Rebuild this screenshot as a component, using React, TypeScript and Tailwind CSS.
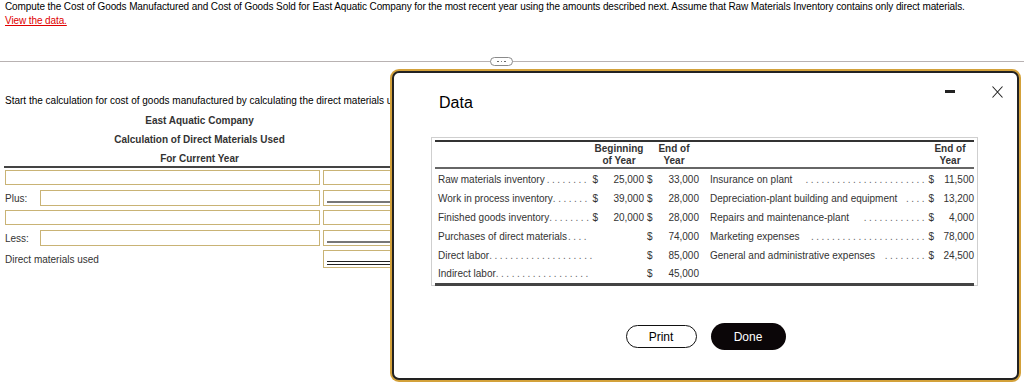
import React from "react";

type LeftRow = {
  label: string;
  dollarA: boolean;
  begin?: string;
  end: string;
  dots: number;
};

type RightRow = {
  label: string;
  amount: string;
  dots: number;
};

const leftRows: LeftRow[] = [
  { label: "Raw materials inventory", dollarA: true, begin: "25,000", end: "33,000", dots: 8 },
  { label: "Work in process inventory", dollarA: true, begin: "39,000", end: "28,000", dots: 7 },
  { label: "Finished goods inventory", dollarA: true, begin: "20,000", end: "28,000", dots: 8 },
  { label: "Purchases of direct materials", dollarA: false, end: "74,000", dots: 4 },
  { label: "Direct labor", dollarA: false, end: "85,000", dots: 20 },
  { label: "Indirect labor", dollarA: false, end: "45,000", dots: 18 },
];

const rightRows: (RightRow | null)[] = [
  { label: "Insurance on plant", amount: "11,500", dots: 23 },
  { label: "Depreciation-plant building and equipment", amount: "13,200", dots: 4 },
  { label: "Repairs and maintenance-plant", amount: "4,000", dots: 12 },
  { label: "Marketing expenses", amount: "78,000", dots: 22 },
  { label: "General and administrative expenses", amount: "24,500", dots: 8 },
  null,
];

function Leader({ count }: { count: number }) {
  return (
    <>
      <span className="flex-1" />
      <span className="mr-[1px] whitespace-nowrap text-[#666] tracking-[2.5px]">
        {".".repeat(count)}
      </span>
    </>
  );
}

function FormBox({ line }: { line?: "single" | "double" }) {
  return (
    <div className="relative h-full w-[90px] border border-[#c9b375] bg-white">
      {line === "single" && (
        <div className="absolute bottom-[2px] left-[3px] right-0 h-[2px] bg-[#777]" />
      )}
      {line === "double" && (
        <div className="absolute bottom-[2px] left-[3px] right-0 h-[4px] border-y-[1.5px] border-[#222]" />
      )}
    </div>
  );
}

export default function App() {
  return (
    <div className="relative h-[385px] w-[1024px] overflow-hidden bg-white font-['Liberation_Sans',Arial,sans-serif] text-black">
      <div className="px-[5px] text-[10px] leading-[14px] tracking-[-0.1px]">
        <p className="whitespace-nowrap">
          Compute the Cost of Goods Manufactured and Cost of Goods Sold for East Aquatic Company for the most recent year using the amounts described next. Assume that Raw Materials Inventory contains only direct materials.
        </p>
        <p>
          <span className="text-[#e00000] underline">View the data.</span>
        </p>
      </div>

      <div className="relative mt-[33px] h-[1px] bg-[#b8b2b2]">
        <div className="absolute left-[490px] top-[-4px] flex h-[9px] w-[23px] items-center justify-center gap-[2px] rounded-full border border-[#8a8a8a] bg-white">
          <span className="h-[1.5px] w-[1.5px] rounded-full bg-[#555]" />
          <span className="h-[1.5px] w-[1.5px] rounded-full bg-[#555]" />
          <span className="h-[1.5px] w-[1.5px] rounded-full bg-[#555]" />
        </div>
      </div>

      <div className="mt-[32px] w-[420px] pl-[5px] text-[10px]">
        <p className="whitespace-nowrap leading-[14px]">
          Start the calculation for cost of goods manufactured by calculating the direct materials used.
        </p>
        <div className="mt-[3px] w-[389px] text-center font-bold text-[#333]">
          <div className="flex h-[19px] items-center justify-center">East Aquatic Company</div>
          <div className="flex h-[19px] items-center justify-center">Calculation of Direct Materials Used</div>
          <div className="flex h-[17px] items-center justify-center pt-[2px]">For Current Year</div>
        </div>
        <div className="ml-[-1px] h-[2px] w-[420px] bg-[#444]" />

        <div className="mt-[2px] flex flex-col text-[#333]">
          <div className="flex h-[20px] items-start gap-[3px]">
            <div className="h-[15px] w-[315px] border border-[#c9b375]" />
            <div className="h-[15px]"><FormBox /></div>
          </div>
          <div className="flex h-[20px] items-start gap-[3px]">
            <div className="flex h-[16px] w-[315px] items-center">
              <span className="w-[35px]">Plus:</span>
              <div className="h-full flex-1 border border-[#c9b375]" />
            </div>
            <div className="h-[16px]"><FormBox line="single" /></div>
          </div>
          <div className="flex h-[20px] items-start gap-[3px]">
            <div className="h-[15px] w-[315px] border border-[#c9b375]" />
            <div className="h-[15px]"><FormBox /></div>
          </div>
          <div className="flex h-[20px] items-start gap-[3px]">
            <div className="flex h-[16px] w-[315px] items-center">
              <span className="w-[35px]">Less:</span>
              <div className="h-full flex-1 border border-[#c9b375]" />
            </div>
            <div className="h-[16px]"><FormBox line="single" /></div>
          </div>
          <div className="flex h-[20px] items-start gap-[3px]">
            <div className="flex h-[18px] w-[315px] items-end pb-[1px]">Direct materials used</div>
            <div className="h-[18px]"><FormBox line="double" /></div>
          </div>
        </div>
      </div>

      {/* Data popup */}
      <div className="absolute left-[392px] top-[71px] flex h-[309px] w-[627px] flex-col rounded-[7px] border-2 border-[#222] bg-white shadow-[0_0_0_2px_#d3a13a]">
        <div className="flex h-[64px] justify-between">
          <div className="pl-[45px] pt-[20px] text-[16px] leading-[19px]">Data</div>
          <div className="flex items-start gap-[37px] pr-[14px] pt-[13px]">
            <div className="mt-[4px] h-[3px] w-[10px] bg-[#222]" />
            <svg width="11" height="12" viewBox="0 0 11 12">
              <path d="M0.5 0.5L10.5 11.5M10.5 0.5L0.5 11.5" stroke="#222" strokeWidth="1.1" />
            </svg>
          </div>
        </div>

        <div className="ml-[37px] h-[149px] w-[547px] border border-[#cfcfcf] px-[3px] pt-[2px] text-[10px] text-[#333]">
          <div className="h-[2px] bg-[#333]" />
          <div className="flex h-[25px] items-center font-bold leading-[12px]">
            <div className="w-[157px]" />
            <div className="w-[54px] text-center">Beginning<br />of Year</div>
            <div className="w-[56px] text-center">End of<br />Year</div>
            <div className="flex-1" />
            <div className="w-[48px] text-center">End of<br />Year</div>
          </div>
          <div className="h-[1.5px] bg-[#666]" />
          <div className="mt-[2px]">
            {leftRows.map((row, i) => {
              const right = rightRows[i];
              return (
                <div key={row.label} className="flex h-[18.8px] items-center whitespace-nowrap">
                  <div className="flex w-[165px] items-center pl-[3px]">
                    <span>{row.label}</span>
                    <Leader count={row.dots} />
                    <span className="w-[10px] pr-[2px] text-right">{row.dollarA ? "$" : ""}</span>
                  </div>
                  <div className="w-[44px] text-right">{row.begin ?? ""}</div>
                  <div className="flex w-[56px] justify-between pl-[3px] pr-[1px]">
                    <span>$</span>
                    <span>{row.end}</span>
                  </div>
                  <div className="w-[10px]" />
                  {right ? (
                    <>
                      <div className="flex w-[226px] items-center">
                        <span>{right.label}</span>
                        <Leader count={right.dots} />
                        <span className="w-[8px] pr-[2px] text-right">$</span>
                      </div>
                      <div className="flex-1 text-right">{right.amount}</div>
                    </>
                  ) : (
                    <div className="flex-1" />
                  )}
                </div>
              );
            })}
          </div>
          <div className="h-[2.5px] bg-[#444]" />
        </div>

        <div className="mt-[37px] flex items-center justify-center gap-[14px] text-[12px]">
          <button className="h-[23px] w-[71px] rounded-full border-[1.5px] border-[#111] bg-white">Print</button>
          <button className="h-[27px] w-[75px] rounded-full bg-[#0b0608] text-white">Done</button>
        </div>
      </div>
    </div>
  );
}
